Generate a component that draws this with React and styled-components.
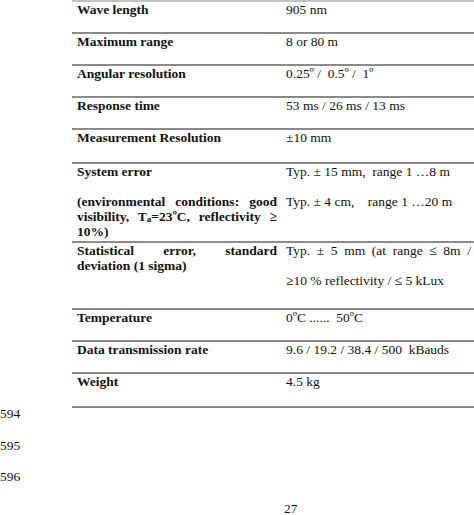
import React from "react";
import styled, { createGlobalStyle } from "styled-components";

const GlobalStyle = createGlobalStyle`
  body {
    margin: 0;
    background: #ffffff;
    color: #111111;
    font-family: "Liberation Serif", "Times New Roman", serif;
    font-size: 13.5px;
  }
`;

const Page = styled.div`
  width: 474px;
  height: 515px;
  overflow: hidden;
`;

const Table = styled.div`
  margin-left: 72px;
  width: 430px;
  border-top: 2px solid #c2c2c2;
`;

const Row = styled.div`
  display: grid;
  grid-template-columns: 209px 1fr;
  border-bottom: 2px solid #8a8a8a;
  padding-bottom: ${(p) => p.$pad || 0}px;
`;

const Label = styled.div`
  padding: 0 4px 0 5px;
  font-weight: bold;
  text-align: justify;
`;

const Value = styled.div`
  padding: 0 5px;
  white-space: pre-wrap;
`;

const Para = styled.p`
  margin: 0 0 ${(p) => (p.$tight ? 0 : 15)}px;
  line-height: 15px;
`;

const SpreadLine = styled(Para)`
  width: 185px;
  white-space: normal;
  text-align: justify;
  text-align-last: justify;
`;

const Sub = styled.span`
  font-size: 9px;
  line-height: 0;
  vertical-align: -1px;
`;

const Numbers = styled.div`
  width: 20px;
  margin-top: -2px;
  text-align: right;
`;

const Num = styled.div`
  line-height: 16px;
  margin-bottom: 15.5px;
`;

const PageNum = styled.div`
  margin: 1.5px 0 0 284px;
  line-height: 16px;
`;

const rows = [
  { label: "Wave length", value: "905 nm" },
  { label: "Maximum range", value: "8 or 80 m" },
  { label: "Angular resolution", value: "0.25º /  0.5º /  1º" },
  { label: "Response time", value: "53 ms / 26 ms / 13 ms" },
  { label: "Measurement Resolution", value: "±10 mm", pad: 2 },
];

const tail = [
  { label: "Temperature", value: "0ºC ......  50ºC" },
  { label: "Data transmission rate", value: "9.6 / 19.2 / 38.4 / 500  kBauds" },
  { label: "Weight", value: "4.5 kg", pad: 2 },
];

const SimpleRow = ({ label, value, pad }) => (
  <Row $pad={pad}>
    <Label>
      <Para>{label}</Para>
    </Label>
    <Value>
      <Para>{value}</Para>
    </Value>
  </Row>
);

export default function App() {
  return (
    <Page>
      <GlobalStyle />
      <Table>
        {rows.map((r) => (
          <SimpleRow key={r.label} {...r} />
        ))}
        <Row $pad={2}>
          <Label>
            <Para>System error</Para>
            <Para $tight>
              (environmental conditions: good visibility, T<Sub>a</Sub>=23ºC, reflectivity ≥ 10%)
            </Para>
          </Label>
          <Value>
            <Para>Typ. ± 15 mm,  range 1 …8 m</Para>
            <Para>Typ. ± 4 cm,    range 1 …20 m</Para>
          </Value>
        </Row>
        <Row $pad={5}>
          <Label>
            <Para>Statistical error, standard deviation (1 sigma)</Para>
          </Label>
          <Value>
            <SpreadLine>Typ. ± 5 mm (at range ≤ 8m /</SpreadLine>
            <Para>≥10 % reflectivity / ≤ 5 kLux</Para>
          </Value>
        </Row>
        {tail.map((r) => (
          <SimpleRow key={r.label} {...r} />
        ))}
      </Table>
      <Numbers>
        <Num>594</Num>
        <Num>595</Num>
        <Num>596</Num>
      </Numbers>
      <PageNum>27</PageNum>
    </Page>
  );
}
